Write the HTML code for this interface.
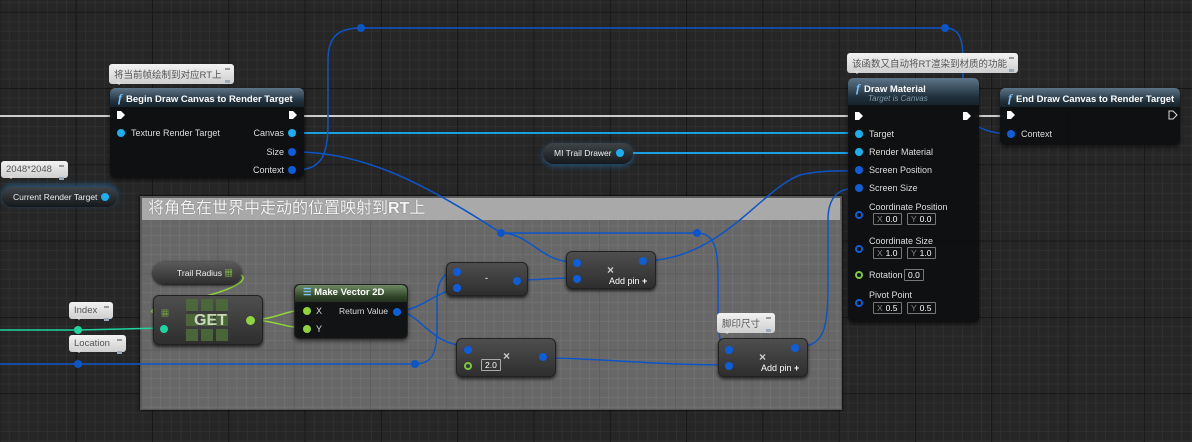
<!DOCTYPE html>
<html><head><meta charset="utf-8"><style>
*{margin:0;padding:0;box-sizing:border-box}
body{width:1192px;height:442px;overflow:hidden;position:relative;font-family:"Liberation Sans","Noto Sans CJK SC",sans-serif;font-size:9px;color:#ddd;
background-color:#262626;
background-image:linear-gradient(#161616 1px,transparent 1px),linear-gradient(90deg,#161616 1px,transparent 1px),linear-gradient(#2f2f2f 1px,transparent 1px),linear-gradient(90deg,#2f2f2f 1px,transparent 1px);
background-size:76.3px 76.3px,76.3px 76.3px,9.54px 9.54px,9.54px 9.54px;background-position:-0.7px 11.7px,-0.7px 11.7px,-0.7px 2.2px,-0.7px 2.2px}
.abs{position:absolute}
.node{position:absolute;background:rgba(14,15,16,.95);border-radius:5px;box-shadow:0 2px 4px rgba(0,0,0,.6)}
.hdr{height:19px;border-radius:5px 5px 0 0;background:linear-gradient(#5d7589,#20303c 70%,#182229);color:#fff;font-weight:bold;font-size:9.5px;padding:3px 0 0 8px;white-space:nowrap}
.hdr i{color:#7bc3ff;font-family:"Liberation Serif",serif;font-size:12px;margin-right:4px}
.lbl{position:absolute;color:#ddd;font-size:9px;white-space:nowrap}
.bub{position:absolute;background:linear-gradient(#f2f2f2,#cfcfcf);border-radius:3px;color:#555;font-size:9.5px;padding:3px 5px;white-space:nowrap}
.bub:after{content:"";position:absolute;left:7px;bottom:-4px;border:3px solid transparent;border-top-color:#ddd}
.bub:before{content:"";position:absolute;right:4px;top:4px;width:5px;height:10px;border-top:2px solid #999;border-bottom:3px solid #9ab}
.pill{position:absolute;border-radius:11px;background:linear-gradient(#3f4448,#16191b);color:#eee;font-size:8.5px;box-shadow:0 1px 3px #000;white-space:nowrap}
.gnode{position:absolute;border-radius:6px;background:linear-gradient(#4e4e4e,#2e2e2e);box-shadow:0 2px 3px rgba(0,0,0,.7);border:1px solid #222}
.fld{position:absolute;border:1px solid #777;color:#fff;font-size:8.5px;height:12px;line-height:10px;padding:0 3px;border-radius:1px}
.fld b{color:#888;font-weight:normal;margin-right:3px}
</style></head><body>

<div class="abs" style="left:140px;top:196px;width:702px;height:214px;background-color:#676767;background-image:linear-gradient(#5c5c5c 1px,transparent 1px),linear-gradient(90deg,#5c5c5c 1px,transparent 1px),linear-gradient(#717171 1px,transparent 1px),linear-gradient(90deg,#717171 1px,transparent 1px);background-size:76.3px 76.3px,76.3px 76.3px,9.54px 9.54px,9.54px 9.54px;border:1px solid #555;box-shadow:0 0 3px #000"></div>
<div class="abs" style="left:142px;top:198px;width:698px;height:22px;background:#a9a9a9;color:#f4f4f4;font-size:16px;padding:0 6px;line-height:22px;text-shadow:0 0 1px #555">将角色在世界中走动的位置映射到<b>RT</b>上</div>

<svg class="abs" style="left:0;top:0" width="1192" height="442" fill="none">
<g stroke="#ccc" stroke-width="2"><path d="M0 116H112M304 116H848M975 116C990 116 990 116 1004 116"/></g>
<g stroke="#1a9fe0" stroke-width="2"><path d="M296 133H858M628 153H858"/></g>
<g stroke="#0d55c7" stroke-width="1.5">
<path d="M296 170C325 170 328 150 328 120V60C328 35 340 28 361 28H945C960 28 963 40 963 60V100C963 125 985 133 1010 134"/>
<path d="M296 152C360 152 420 180 501 233H697C720 233 718 260 718 300C718 340 720 349 728 349"/>
<path d="M501 233C530 233 540 262 574 262"/>
<path d="M516 280C540 280 550 278 574 278"/>
<path d="M642 261C720 261 760 190 800 175C820 170 840 171 858 171"/>
<path d="M795 347C825 347 828 330 828 280V220C828 195 840 188 858 188"/>
<path d="M0 364H415C440 364 437 340 437 300C437 280 445 271 457 271"/>
<path d="M396 311C420 311 430 295 457 288"/>
<path d="M396 311C420 311 430 346 468 346"/>
<path d="M542 358C600 358 650 365 728 365"/>
</g>
<path d="M0 330H78L163 328" stroke="#1fd4a0" stroke-width="1.5"/>
<g stroke="#8ed43a" stroke-width="1.5"><path d="M228 272C260 275 240 290 180 302C140 310 150 315 163 311"/><path d="M249 320C275 320 285 310 306 310M249 320C275 320 285 328 306 328"/></g>
<g fill="#0d55c7"><ellipse cx="361" cy="28" rx="4" ry="4"/><ellipse cx="945" cy="28" rx="4" ry="4"/><circle cx="501" cy="233" r="4"/><circle cx="697" cy="233" r="4"/><circle cx="415" cy="364" r="4"/><circle cx="78" cy="364" r="4"/></g>
<circle cx="78" cy="330" r="4" fill="#1fd4a0"/>
</svg>

<div class="bub" style="left:109px;top:64px;width:125px">将当前帧绘制到对应RT上</div>
<div class="bub" style="left:1px;top:161px;width:67px">2048*2048</div>
<div class="bub" style="left:847px;top:53px;width:171px">该函数又自动将RT渲染到材质的功能</div>
<div class="bub" style="left:717px;top:313px;width:58px">脚印尺寸</div>
<div class="bub" style="left:69px;top:302px;width:44px">Index</div>
<div class="bub" style="left:69px;top:335px;width:57px">Location</div>

<div class="node" style="left:110px;top:88px;width:194px;height:90px">
<div class="hdr"><i>f</i>Begin Draw Canvas to Render Target</div>
<svg class="abs" style="left:6px;top:22px" width="10" height="10"><path d="M1 1H5L9 5L5 9H1Z" fill="#fff"/></svg>
<svg class="abs" style="left:178px;top:22px" width="10" height="10"><path d="M1 1H5L9 5L5 9H1Z" fill="#fff"/></svg>
<div class="abs" style="left:7px;top:41px;width:8px;height:8px;border-radius:50%;background:#1ab0f0"></div>
<div class="lbl" style="left:21px;top:40px">Texture Render Target</div>
<div class="lbl" style="right:20px;top:40px">Canvas</div>
<div class="abs" style="left:178px;top:41px;width:8px;height:8px;border-radius:50%;background:#1ab0f0"></div>
<div class="lbl" style="right:20px;top:59px">Size</div>
<div class="abs" style="left:178px;top:60px;width:8px;height:8px;border-radius:50%;background:#0d5ed8"></div>
<div class="lbl" style="right:20px;top:77px">Context</div>
<div class="abs" style="left:178px;top:78px;width:8px;height:8px;border-radius:50%;background:#0d5ed8"></div>
</div>

<div class="pill" style="left:2px;top:187px;width:115px;height:20px;padding:5px 0 0 11px;box-shadow:0 -2px 6px rgba(40,140,220,.5)">Current Render Target</div>
<div class="abs" style="left:101px;top:193px;width:8px;height:8px;border-radius:50%;background:#1ab0f0"></div>
<div class="pill" style="left:543px;top:143px;width:90px;height:21px;padding:5px 0 0 11px;box-shadow:0 2px 6px rgba(40,140,220,.5)">MI Trail Drawer</div>
<div class="abs" style="left:616px;top:149px;width:8px;height:8px;border-radius:50%;background:#1ab0f0"></div>

<div class="node" style="left:848px;top:78px;width:131px;height:244px">
<div class="hdr" style="height:27px">
<div><i>f</i>Draw Material</div><div style="font-style:italic;font-weight:normal;color:#7f97a8;font-size:8px;margin:-2px 0 0 12px">Target is Canvas</div></div>
<svg class="abs" style="left:6px;top:33px" width="10" height="10"><path d="M1 1H5L9 5L5 9H1Z" fill="#fff"/></svg>
<svg class="abs" style="left:114px;top:33px" width="10" height="10"><path d="M1 1H5L9 5L5 9H1Z" fill="#fff"/></svg>
<div class="abs" style="left:7px;top:52px;width:8px;height:8px;border-radius:50%;background:#1ab0f0"></div><div class="lbl" style="left:21px;top:51px">Target</div>
<div class="abs" style="left:7px;top:70px;width:8px;height:8px;border-radius:50%;background:#1ab0f0"></div><div class="lbl" style="left:21px;top:69px">Render Material</div>
<div class="abs" style="left:7px;top:88px;width:8px;height:8px;border-radius:50%;background:#0d5ed8"></div><div class="lbl" style="left:21px;top:87px">Screen Position</div>
<div class="abs" style="left:7px;top:106px;width:8px;height:8px;border-radius:50%;background:#0d5ed8"></div><div class="lbl" style="left:21px;top:105px">Screen Size</div>
<div class="lbl" style="left:21px;top:124px">Coordinate Position</div>
<div class="abs" style="left:7px;top:133px;width:8px;height:8px;border-radius:50%;border:2px solid #0d5ed8"></div>
<div class="fld" style="left:25px;top:135px"><b>X</b>0.0</div><div class="fld" style="left:59px;top:135px"><b>Y</b>0.0</div>
<div class="lbl" style="left:21px;top:158px">Coordinate Size</div>
<div class="abs" style="left:7px;top:167px;width:8px;height:8px;border-radius:50%;border:2px solid #0d5ed8"></div>
<div class="fld" style="left:25px;top:169px"><b>X</b>1.0</div><div class="fld" style="left:59px;top:169px"><b>Y</b>1.0</div>
<div class="abs" style="left:7px;top:193px;width:8px;height:8px;border-radius:50%;border:2px solid #7ec83a"></div><div class="lbl" style="left:21px;top:192px">Rotation</div>
<div class="fld" style="left:56px;top:191px">0.0</div>
<div class="lbl" style="left:21px;top:212px">Pivot Point</div>
<div class="abs" style="left:7px;top:221px;width:8px;height:8px;border-radius:50%;border:2px solid #0d5ed8"></div>
<div class="fld" style="left:25px;top:224px"><b>X</b>0.5</div><div class="fld" style="left:59px;top:224px"><b>Y</b>0.5</div>
</div>

<div class="node" style="left:1000px;top:88px;width:180px;height:57px">
<div class="hdr"><i>f</i>End Draw Canvas to Render Target</div>
<svg class="abs" style="left:6px;top:22px" width="10" height="10"><path d="M1 1H5L9 5L5 9H1Z" fill="#fff"/></svg>
<svg class="abs" style="left:168px;top:22px" width="10" height="10"><path d="M1 1H5L9 5L5 9H1Z" fill="none" stroke="#ddd"/></svg>
<div class="abs" style="left:7px;top:42px;width:8px;height:8px;border-radius:50%;background:#0d5ed8"></div><div class="lbl" style="left:21px;top:41px">Context</div>
</div>

<div class="pill" style="left:153px;top:262px;width:88px;height:22px;background:linear-gradient(#5a5a5a,#2e2e2e);padding:5px 0 0 24px;font-size:8.5px">Trail Radius <span style="color:#9de03c">▦</span></div>
<div class="gnode" style="left:153px;top:295px;width:110px;height:50px">
<div class="abs" style="left:32px;top:3px;width:42px;height:42px;background:repeating-linear-gradient(90deg,#4d6a3a 0 12px,transparent 12px 15px);opacity:.9"></div>
<div class="abs" style="left:32px;top:3px;width:42px;height:42px;background:repeating-linear-gradient(#3c3c3c 0 0,transparent 0 12px,#3c3c3c 12px 15px)"></div>
<div class="abs" style="left:40px;top:16px;color:#c8d8b8;font-size:16px;font-weight:bold">GET</div>
<div class="abs" style="left:7px;top:12px;color:#9de03c;font-size:8px">▦</div>
<div class="abs" style="left:6px;top:29px;width:8px;height:8px;border-radius:50%;background:#1fd4a0"></div>
<div class="abs" style="left:92px;top:20px;width:9px;height:9px;border-radius:50%;background:#8ed43a"></div>
</div>
<div class="node" style="left:294px;top:284px;width:114px;height:55px;border:1px solid #222">
<div class="hdr" style="height:17px;padding-top:2px;background:linear-gradient(#6d8a63,#2f4428 70%,#223020)"><span style="color:#7bc3ff">☰</span> Make Vector 2D</div>
<div class="abs" style="left:8px;top:22px;width:8px;height:8px;border-radius:50%;background:#8ed43a"></div><div class="lbl" style="left:21px;top:21px">X</div>
<div class="abs" style="left:8px;top:40px;width:8px;height:8px;border-radius:50%;background:#8ed43a"></div><div class="lbl" style="left:21px;top:39px">Y</div>
<div class="lbl" style="left:44px;top:21px;font-size:8.5px">Return Value</div>
<div class="abs" style="left:98px;top:23px;width:8px;height:8px;border-radius:50%;background:#0d5ed8"></div>
</div>
<div class="gnode" style="left:446px;top:262px;width:82px;height:34px"><div class="abs" style="left:38px;top:10px;color:#ccc;font-weight:bold">-</div>
<div class="abs" style="left:6px;top:5px;width:8px;height:8px;border-radius:50%;background:#0d5ed8"></div><div class="abs" style="left:6px;top:21px;width:8px;height:8px;border-radius:50%;background:#0d5ed8"></div><div class="abs" style="left:66px;top:14px;width:8px;height:8px;border-radius:50%;background:#0d5ed8"></div></div>
<div class="gnode" style="left:456px;top:338px;width:100px;height:39px"><div class="abs" style="left:46px;top:10px;color:#ccc;font-weight:bold;font-size:12px">×</div>
<div class="abs" style="left:7px;top:7px;width:8px;height:8px;border-radius:50%;background:#0d5ed8"></div><div class="abs" style="left:7px;top:23px;width:8px;height:8px;border-radius:50%;border:2px solid #7ec83a"></div>
<div class="fld" style="left:24px;top:20px;border-color:#aaa">2.0</div>
<div class="abs" style="left:82px;top:14px;width:8px;height:8px;border-radius:50%;background:#0d5ed8"></div></div>
<div class="gnode" style="left:566px;top:251px;width:90px;height:38px"><div class="abs" style="left:40px;top:11px;color:#ccc;font-weight:bold;font-size:12px">×</div>
<div class="abs" style="left:42px;top:24px;color:#fff;font-size:9px">Add pin <b>+</b></div>
<div class="abs" style="left:6px;top:7px;width:8px;height:8px;border-radius:50%;background:#0d5ed8"></div><div class="abs" style="left:6px;top:23px;width:8px;height:8px;border-radius:50%;background:#0d5ed8"></div><div class="abs" style="left:72px;top:5px;width:8px;height:8px;border-radius:50%;background:#0d5ed8"></div></div>
<div class="gnode" style="left:718px;top:338px;width:90px;height:39px"><div class="abs" style="left:40px;top:11px;color:#ccc;font-weight:bold;font-size:12px">×</div>
<div class="abs" style="left:42px;top:24px;color:#fff;font-size:9px">Add pin <b>+</b></div>
<div class="abs" style="left:6px;top:7px;width:8px;height:8px;border-radius:50%;background:#0d5ed8"></div><div class="abs" style="left:6px;top:23px;width:8px;height:8px;border-radius:50%;background:#0d5ed8"></div><div class="abs" style="left:72px;top:5px;width:8px;height:8px;border-radius:50%;background:#0d5ed8"></div></div>
</body></html>
